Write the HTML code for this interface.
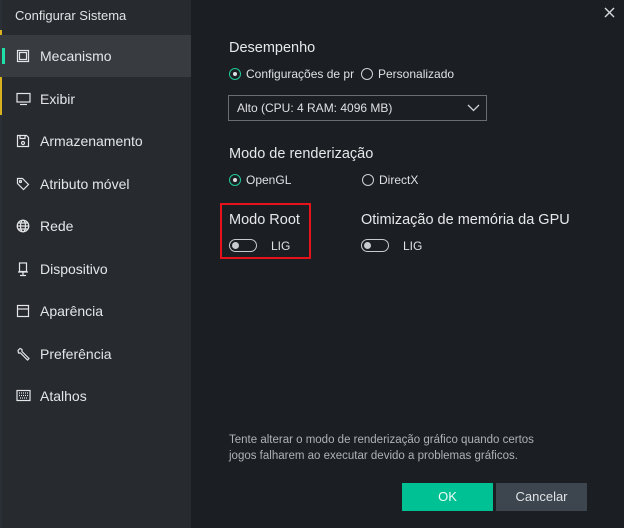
<!DOCTYPE html>
<html><head><meta charset="utf-8"><style>
*{margin:0;padding:0;box-sizing:border-box}
body{width:624px;height:528px;background:#1b1e22;font-family:"Liberation Sans","DejaVu Sans",sans-serif;color:#e6e8ea;position:relative;overflow:hidden}
.side{position:absolute;left:0;top:0;width:191px;height:528px;background:#272a2f}
.strip{position:absolute;left:0;top:0;width:2px;height:528px;background:#2b3036}
.title{position:absolute;left:15px;top:8px;font-size:13px;color:#e0e2e4}
.item{position:absolute;left:0;width:191px;height:42px;font-size:14px;color:#e4e6e8}
.item span{position:absolute;left:40px;top:13px}
.item svg{position:absolute;left:16px;top:14px}
.sel{background:#383c41}
.sel:before{content:"";position:absolute;left:2px;top:13px;width:3px;height:16px;background:#1ee0a8}
.a{position:absolute;white-space:nowrap}
.h{font-size:14.5px;color:#e6e8ea}
.r{font-size:12px;color:#dfe1e3}
.rad{position:absolute;width:12px;height:12px;border:1.3px solid #cfd2d5;border-radius:50%}
.rad.on{border-color:#1fc99a}
.rad.on:after{content:"";position:absolute;left:2.5px;top:2.5px;width:4.5px;height:4.5px;border-radius:50%;background:#dfe1e3}
.tog{position:absolute;width:28px;height:13px;border:1.4px solid #c8cbce;border-radius:7px}
.tog:after{content:"";position:absolute;left:2px;top:1.6px;width:7px;height:7px;border-radius:50%;background:#c8cbce}
</style></head><body>
<div class="side"></div><div class="strip"></div>
<div style="position:absolute;left:0;top:30px;width:2px;height:85px;background:#d8b020"></div>
<div class="title">Configurar Sistema</div>
<div class="item sel" style="top:35px"><svg width="14" height="14" viewBox="0 0 14 14" fill="none" stroke="#e4e6e8" stroke-width="1.2"><rect x="1.5" y="1.5" width="11" height="11"/><rect x="3.5" y="3.5" width="7" height="7"/></svg><span>Mecanismo</span></div>
<div class="item" style="top:78px"><svg width="15" height="14" viewBox="0 0 15 14" fill="none" stroke="#e4e6e8" stroke-width="1.2"><rect x="1" y="1.5" width="13" height="8.5"/><path d="M4 12.5h7"/></svg><span>Exibir</span></div>
<div class="item" style="top:120px"><svg width="14" height="14" viewBox="0 0 14 14" fill="none" stroke="#e4e6e8" stroke-width="1.2"><path d="M1.5 1.5h9l2 2v9h-11z"/><path d="M4 1.5v3h5v-3"/><circle cx="7" cy="9" r="1.5"/></svg><span>Armazenamento</span></div>
<div class="item" style="top:163px"><svg width="14" height="14" viewBox="0 0 14 14" fill="none" stroke="#e4e6e8" stroke-width="1.2"><path d="M1.5 1.5h5l6 6-5 5-6-6z"/><circle cx="4.5" cy="4.5" r="1"/></svg><span>Atributo móvel</span></div>
<div class="item" style="top:205px"><svg width="14" height="14" viewBox="0 0 14 14" fill="none" stroke="#e4e6e8" stroke-width="1.2"><circle cx="7" cy="7" r="5.8"/><ellipse cx="7" cy="7" rx="2.5" ry="5.8"/><path d="M1.2 7h11.6M2 4h10M2 10h10"/></svg><span>Rede</span></div>
<div class="item" style="top:248px"><svg width="14" height="15" viewBox="0 0 14 15" fill="none" stroke="#e4e6e8" stroke-width="1.2"><rect x="3.5" y="1" width="7" height="8.5"/><path d="M2 10h10M7 10v3M4 13.5h6"/></svg><span>Dispositivo</span></div>
<div class="item" style="top:290px"><svg width="14" height="14" viewBox="0 0 14 14" fill="none" stroke="#e4e6e8" stroke-width="1.2"><rect x="1.5" y="1.5" width="11" height="11"/><path d="M1.5 5h11"/></svg><span>Aparência</span></div>
<div class="item" style="top:333px"><svg width="15" height="15" viewBox="0 0 15 15" fill="none" stroke="#e4e6e8" stroke-width="1.2"><path d="M2 3.5l2-2 2 1v2l7 7-1.5 1.5-7-7h-2z"/></svg><span>Preferência</span></div>
<div class="item" style="top:375px"><svg width="15" height="13" viewBox="0 0 15 13" fill="none" stroke="#e4e6e8" stroke-width="1.2"><rect x="1" y="1.5" width="13" height="10"/><path d="M3 4h9M3 6.5h9M4 9h7" stroke-dasharray="1 1"/></svg><span>Atalhos</span></div>

<svg class="a" style="left:604px;top:7px" width="11" height="11" viewBox="0 0 11 11" stroke="#d8dadc" stroke-width="1.4"><path d="M1 1l9 9M10 1l-9 9"/></svg>

<div class="a h" style="left:229px;top:40px">Desempenho</div>
<div class="rad on" style="left:229px;top:68px"></div>
<div class="a r" style="left:246px;top:67px">Configurações de pr</div>
<div class="rad" style="left:361px;top:68px"></div>
<div class="a r" style="left:378px;top:67px">Personalizado</div>
<div class="a" style="left:228px;top:95px;width:259px;height:26px;border:1px solid #6a6e73"></div>
<div class="a r" style="left:237px;top:101px">Alto (CPU: 4 RAM: 4096 MB)</div>
<svg class="a" style="left:467px;top:104px" width="13" height="8" viewBox="0 0 13 8" fill="none" stroke="#d0d3d6" stroke-width="1.3"><path d="M1 1l5.5 5.5L12 1"/></svg>

<div class="a h" style="left:229px;top:146px">Modo de renderização</div>
<div class="rad on" style="left:229px;top:174px"></div>
<div class="a r" style="left:246px;top:173px">OpenGL</div>
<div class="rad" style="left:362px;top:174px"></div>
<div class="a r" style="left:379px;top:173px">DirectX</div>

<div class="a" style="left:220px;top:203px;width:91px;height:56px;border:2px solid #e8131a"></div>
<div class="a h" style="left:229px;top:212px">Modo Root</div>
<div class="tog" style="left:229px;top:239px"></div>
<div class="a r" style="left:271px;top:239px">LIG</div>
<div class="a h" style="left:361px;top:212px">Otimização de memória da GPU</div>
<div class="tog" style="left:361px;top:239px"></div>
<div class="a r" style="left:403px;top:239px">LIG</div>

<div class="a" style="left:229px;top:432px;font-size:11.5px;color:#aeb2b6;line-height:16px">Tente alterar o modo de renderização gráfico quando certos<br>jogos falharem ao executar devido a problemas gráficos.</div>
<div class="a" style="left:402px;top:483px;width:91px;height:28px;background:#00c194;color:#eefaf6;font-size:13px;text-align:center;line-height:28px">OK</div>
<div class="a" style="left:496px;top:483px;width:91px;height:28px;background:#3d464e;color:#e0e3e6;font-size:13px;text-align:center;line-height:28px">Cancelar</div>
</body></html>
